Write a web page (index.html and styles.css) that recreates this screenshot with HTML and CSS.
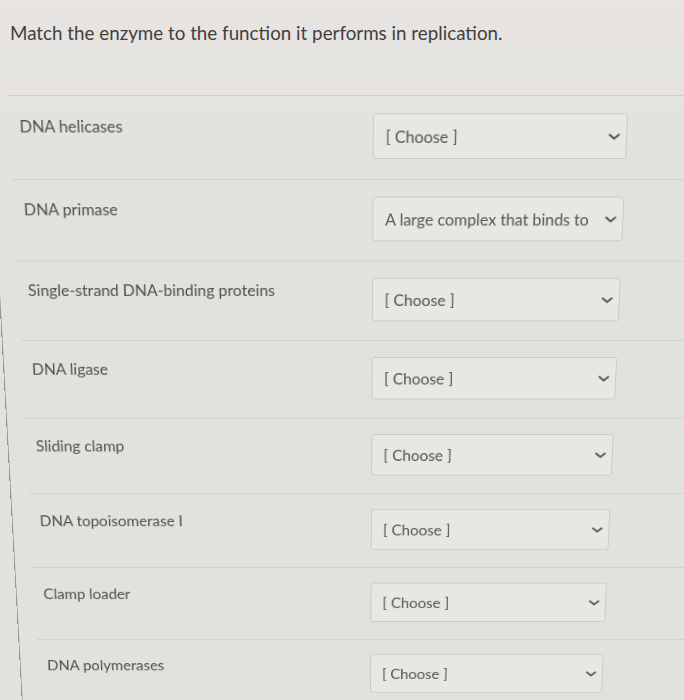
FILE: index.html
```html
<!DOCTYPE html>
<html>
<head>
<meta charset="utf-8">
<link rel="stylesheet" href="styles.css">
</head>
<body>
<div class="page">
  <h1 class="title">Match the enzyme to the function it performs in replication.</h1>
  <div class="frame">
    <div class="list">
      <div class="row"><div class="label">DNA helicases</div><div class="select"><span class="value">[ Choose ]</span><svg class="chev" viewBox="0 0 12 7"><path d="M1.5 1.5 L6 5.5 L10.5 1.5" /></svg></div></div>
      <div class="row"><div class="label">DNA primase</div><div class="select"><span class="value">A large complex that binds to</span><svg class="chev" viewBox="0 0 12 7"><path d="M1.5 1.5 L6 5.5 L10.5 1.5" /></svg></div></div>
      <div class="row"><div class="label">Single-strand DNA-binding proteins</div><div class="select"><span class="value">[ Choose ]</span><svg class="chev" viewBox="0 0 12 7"><path d="M1.5 1.5 L6 5.5 L10.5 1.5" /></svg></div></div>
      <div class="row"><div class="label">DNA ligase</div><div class="select"><span class="value">[ Choose ]</span><svg class="chev" viewBox="0 0 12 7"><path d="M1.5 1.5 L6 5.5 L10.5 1.5" /></svg></div></div>
      <div class="row"><div class="label">Sliding clamp</div><div class="select"><span class="value">[ Choose ]</span><svg class="chev" viewBox="0 0 12 7"><path d="M1.5 1.5 L6 5.5 L10.5 1.5" /></svg></div></div>
      <div class="row"><div class="label">DNA topoisomerase I</div><div class="select"><span class="value">[ Choose ]</span><svg class="chev" viewBox="0 0 12 7"><path d="M1.5 1.5 L6 5.5 L10.5 1.5" /></svg></div></div>
      <div class="row"><div class="label">Clamp loader</div><div class="select"><span class="value">[ Choose ]</span><svg class="chev" viewBox="0 0 12 7"><path d="M1.5 1.5 L6 5.5 L10.5 1.5" /></svg></div></div>
      <div class="row"><div class="label">DNA polymerases</div><div class="select"><span class="value">[ Choose ]</span><svg class="chev" viewBox="0 0 12 7"><path d="M1.5 1.5 L6 5.5 L10.5 1.5" /></svg></div></div>
    </div>
  </div>
</div>
</body>
</html>
```

FILE: styles.css
```css
html, body {
  margin: 0;
  padding: 0;
  height: 100%;
  overflow: hidden;
}
body {
  background: #e3e1dd;
  font-family: Lato, "Open Sans", sans-serif;
  color: #4a4a4a;
}
.page {
  width: 684px;
  height: 700px;
  overflow: hidden;
  position: relative;
  background: linear-gradient(#e7e4e1, #e2e1dd 30%, #e1e1dd);
}
.title {
  margin: 0;
  height: 95px;
  box-sizing: border-box;
  padding: 22px 0 0 10px;
  font-size: 18.8px;
  line-height: 22px;
  font-weight: 400;
  color: #404040;
}
.frame {
  margin-left: -12px;
  width: 760px;
  padding-left: 19px;
  border-left: 1px solid #959592;
  transform-origin: 354px 0;
  transform: perspective(1700px) rotateX(-15deg);
  height: 760px;
}
.list {
  border-top: 1px solid #cfcecb;
}
.row {
  display: grid;
  grid-template-columns: 355px 256px;
  align-items: start;
  height: 87px;
  box-sizing: content-box;
  padding: 0 0 0 10px;
  border-bottom: 1px solid #cfcecb;
}
.label {
  margin-top: 22px;
  font-size: 16.3px;
  line-height: 20px;
  color: #505050;
}
.select {
  margin-top: 18px;
  height: 48px;
  box-sizing: border-box;
  border: 1px solid #cbc9c5;
  border-radius: 3px;
  background: #e8e7e3;
  display: flex;
  align-items: center;
  padding: 0 6px 0 12px;
}
.value {
  flex: 1;
  font-size: 16.3px;
  color: #545454;
  white-space: nowrap;
  overflow: hidden;
}
.chev {
  width: 12px;
  height: 7px;
  flex: none;
}
.chev path {
  fill: none;
  stroke: #5a5a5a;
  stroke-width: 2.3;
  stroke-linecap: round;
  stroke-linejoin: round;
}
```
